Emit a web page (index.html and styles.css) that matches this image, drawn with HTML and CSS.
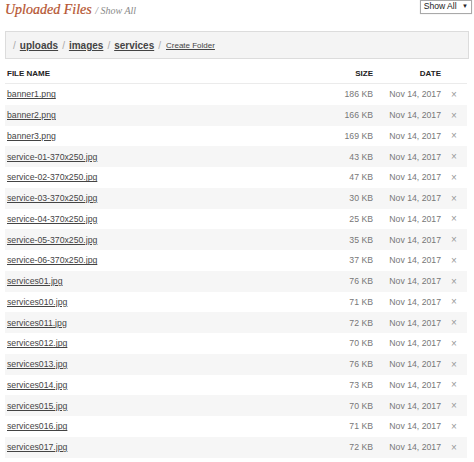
FILE: index.html
```html
<!DOCTYPE html>
<html>
<head>
<meta charset="utf-8">
<link rel="stylesheet" href="styles.css">
</head>
<body>
<div class="page">
  <div class="topbar">
    <h1 class="title">Uploaded Files <span class="sub">/ Show All</span></h1>
    <div class="select">Show All <span class="caret">&#9660;</span></div>
  </div>
  <div class="crumbs">
    <span class="sep">/</span>
    <a class="crumb" href="#">uploads</a>
    <span class="sep">/</span>
    <a class="crumb" href="#">images</a>
    <span class="sep">/</span>
    <a class="crumb" href="#">services</a>
    <span class="sep">/</span>
    <a class="create" href="#">Create Folder</a>
  </div>
  <div class="table">
    <div class="row head">
      <div class="c-name">FILE NAME</div>
      <div class="c-size">SIZE</div>
      <div class="c-date">DATE</div>
      <div class="c-x"></div>
    </div>
    <div class="row"><div class="c-name"><a href="#">banner1.png</a></div><div class="c-size">186 KB</div><div class="c-date">Nov 14, 2017</div><div class="c-x">&#215;</div></div>
    <div class="row"><div class="c-name"><a href="#">banner2.png</a></div><div class="c-size">166 KB</div><div class="c-date">Nov 14, 2017</div><div class="c-x">&#215;</div></div>
    <div class="row"><div class="c-name"><a href="#">banner3.png</a></div><div class="c-size">169 KB</div><div class="c-date">Nov 14, 2017</div><div class="c-x">&#215;</div></div>
    <div class="row"><div class="c-name"><a href="#">service-01-370x250.jpg</a></div><div class="c-size">43 KB</div><div class="c-date">Nov 14, 2017</div><div class="c-x">&#215;</div></div>
    <div class="row"><div class="c-name"><a href="#">service-02-370x250.jpg</a></div><div class="c-size">47 KB</div><div class="c-date">Nov 14, 2017</div><div class="c-x">&#215;</div></div>
    <div class="row"><div class="c-name"><a href="#">service-03-370x250.jpg</a></div><div class="c-size">30 KB</div><div class="c-date">Nov 14, 2017</div><div class="c-x">&#215;</div></div>
    <div class="row"><div class="c-name"><a href="#">service-04-370x250.jpg</a></div><div class="c-size">25 KB</div><div class="c-date">Nov 14, 2017</div><div class="c-x">&#215;</div></div>
    <div class="row"><div class="c-name"><a href="#">service-05-370x250.jpg</a></div><div class="c-size">35 KB</div><div class="c-date">Nov 14, 2017</div><div class="c-x">&#215;</div></div>
    <div class="row"><div class="c-name"><a href="#">service-06-370x250.jpg</a></div><div class="c-size">37 KB</div><div class="c-date">Nov 14, 2017</div><div class="c-x">&#215;</div></div>
    <div class="row"><div class="c-name"><a href="#">services01.jpg</a></div><div class="c-size">76 KB</div><div class="c-date">Nov 14, 2017</div><div class="c-x">&#215;</div></div>
    <div class="row"><div class="c-name"><a href="#">services010.jpg</a></div><div class="c-size">71 KB</div><div class="c-date">Nov 14, 2017</div><div class="c-x">&#215;</div></div>
    <div class="row"><div class="c-name"><a href="#">services011.jpg</a></div><div class="c-size">72 KB</div><div class="c-date">Nov 14, 2017</div><div class="c-x">&#215;</div></div>
    <div class="row"><div class="c-name"><a href="#">services012.jpg</a></div><div class="c-size">70 KB</div><div class="c-date">Nov 14, 2017</div><div class="c-x">&#215;</div></div>
    <div class="row"><div class="c-name"><a href="#">services013.jpg</a></div><div class="c-size">76 KB</div><div class="c-date">Nov 14, 2017</div><div class="c-x">&#215;</div></div>
    <div class="row"><div class="c-name"><a href="#">services014.jpg</a></div><div class="c-size">73 KB</div><div class="c-date">Nov 14, 2017</div><div class="c-x">&#215;</div></div>
    <div class="row"><div class="c-name"><a href="#">services015.jpg</a></div><div class="c-size">70 KB</div><div class="c-date">Nov 14, 2017</div><div class="c-x">&#215;</div></div>
    <div class="row"><div class="c-name"><a href="#">services016.jpg</a></div><div class="c-size">71 KB</div><div class="c-date">Nov 14, 2017</div><div class="c-x">&#215;</div></div>
    <div class="row"><div class="c-name"><a href="#">services017.jpg</a></div><div class="c-size">72 KB</div><div class="c-date">Nov 14, 2017</div><div class="c-x">&#215;</div></div>
  </div>
</div>
</body>
</html>
```

FILE: styles.css
```css
html, body {
  margin: 0;
  padding: 0;
  background: #ffffff;
}
.page {
  padding: 0 5px;
  font-family: "Liberation Sans", Arial, sans-serif;
  color: #333;
}
.topbar {
  display: flex;
  justify-content: space-between;
  align-items: flex-start;
  height: 31px;
}
.title {
  margin: 0;
  font-family: "Liberation Serif", "Times New Roman", serif;
  font-style: italic;
  font-weight: normal;
  font-size: 14px;
  line-height: 20px;
  color: #b5532f;
  -webkit-text-stroke: 0.2px #b5532f;
}
.sub {
  font-size: 10px;
  color: #8a8a8a;
  -webkit-text-stroke: 0;
}
.select {
  margin-right: -3px;
  border: 1px solid #a9a9a9;
  background: #fff;
  font-size: 8.6px;
  line-height: 11px;
  padding: 0 3px 0 3px;
  color: #222;
  box-shadow: 0 0 1px #ccc;
}
.caret {
  font-size: 6px;
  margin-left: 3px;
  position: relative;
  top: -1px;
}
.crumbs {
  height: 25px;
  border: 1px solid #dcdcdc;
  background: #f4f4f4;
  display: flex;
  align-items: center;
  gap: 4px;
  padding-left: 7px;
  padding-top: 1px;
  box-sizing: content-box;
}
.sep {
  color: #aaa;
  font-size: 10px;
}
.crumb {
  font-weight: bold;
  font-size: 10px;
  color: #444;
  text-decoration: underline;
}
.create {
  font-size: 8px;
  color: #444;
  text-decoration: underline;
  margin-left: 1px;
}
.table {
  margin-right: 2px;
}
.row {
  display: grid;
  grid-template-columns: 1fr 60px 68px 26px;
  align-items: center;
  height: 20.75px;
  font-size: 8.7px;
  color: #777;
}
.row:nth-child(odd) {
  background: #f6f6f6;
}
.row.head {
  height: 25px;
  align-items: end;
  box-sizing: border-box;
  background: #fff;
  border-bottom: 1px solid #ebebeb;
  font-size: 8px;
  font-weight: bold;
  color: #222;
}
.row.head > div {
  padding-bottom: 5px;
}
.c-name {
  padding-left: 2px;
}
.c-name a {
  color: #444;
  text-decoration: underline;
}
.c-size, .c-date {
  text-align: right;
}
.c-x {
  text-align: center;
  font-size: 10px;
  color: #999;
}
```
